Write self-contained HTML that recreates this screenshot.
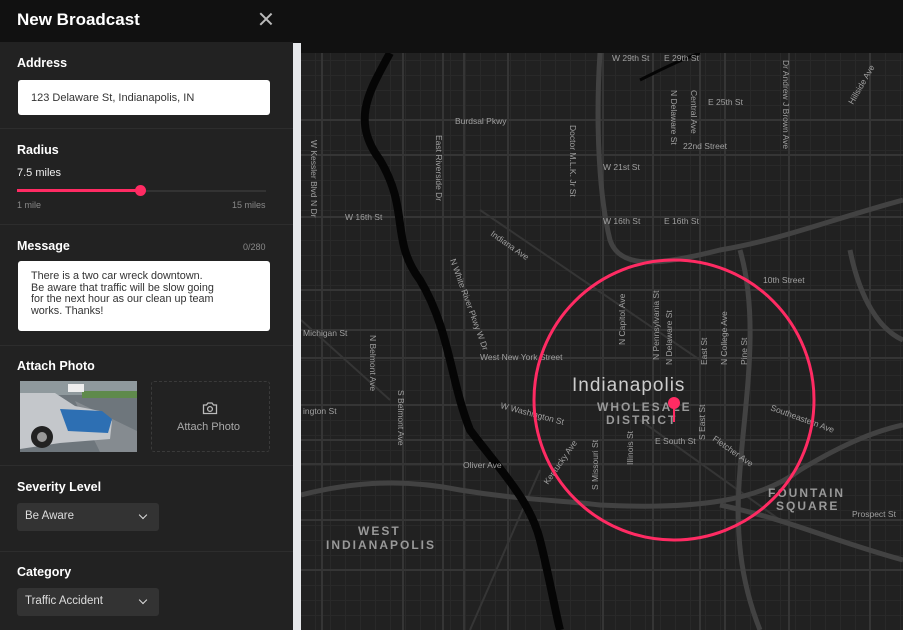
<!DOCTYPE html>
<html><head><meta charset="utf-8"><style>
*{margin:0;padding:0;box-sizing:border-box}
body{width:903px;height:630px;overflow:hidden;background:#222;font-family:"Liberation Sans",sans-serif;position:relative}
.hdr{position:absolute;left:0;top:0;width:903px;height:53px;background:#111}
.panel{position:absolute;left:0;top:0;width:293px;height:630px;background:#222}
.ph{position:absolute;left:0;top:0;width:293px;height:42px;background:#111}
.ph h1{position:absolute;left:17px;top:10px;color:#fff;font-size:17px;font-weight:bold}
.x{position:absolute;left:259px;top:12px;width:14px;height:14px}
.x:before,.x:after{content:"";position:absolute;left:6px;top:-1px;width:1.5px;height:16px;background:#bbb;transform:rotate(45deg)}
.x:after{transform:rotate(-45deg)}
.lbl{position:absolute;left:17px;color:#fff;font-size:12.5px;font-weight:bold}
.div{position:absolute;left:0;width:293px;height:1px;background:#2d2d2d}
.inp{position:absolute;left:18px;width:252px;background:#fff;border-radius:3px;color:#333;font-size:11px}
.sm{position:absolute;font-size:9px;color:#888}
.dd{position:absolute;left:17px;width:142px;height:28px;background:#333;border-radius:3px;color:#ddd;font-size:11.5px;padding:7px 0 0 8px}
.dd:after{content:"";position:absolute;right:13px;top:9px;width:5px;height:5px;border-right:1.5px solid #ddd;border-bottom:1.5px solid #ddd;transform:rotate(45deg)}
.sb{position:absolute;left:293px;top:43px;width:8px;height:587px;background:#e6e8eb}
</style></head><body>
<div class="hdr"></div>
<svg style="position:absolute;left:301px;top:53px" width="602" height="577" viewBox="301 53 602 577">
<defs><pattern id="g" width="15" height="15" patternUnits="userSpaceOnUse"><path d="M0 .5H15M.5 0V15" stroke="#292929" stroke-width="1"/></pattern></defs>
<rect x="301" y="53" width="602" height="577" fill="#212121"/>
<rect x="301" y="53" width="602" height="577" fill="url(#g)"/>
<g stroke="#353535" stroke-width="2" fill="none">
<path d="M301 120H903M301 155H903M301 217H903M301 290H903M301 330H903M301 358H903M301 405H903M301 440H903M301 464H903M301 520H903M301 570H903"/>
<path d="M322 53V630M403 53V630M443 53V630M464 53V630M508 53V630M603 53V630M653 53V630M700 53V630M725 53V630M789 53V630M870 53V630"/>
<path d="M301 320L390 400M480 210L700 360M640 420L780 520M540 470L470 630"/>
</g>
<g stroke="#424242" stroke-width="5" fill="none">
<path d="M301 495C360 480 410 480 460 490C520 500 560 500 600 505C700 510 760 500 800 470C850 440 880 430 903 425"/>
<path d="M600 53C595 130 600 200 610 240C620 270 660 265 720 250C780 240 830 220 903 200"/>
<path d="M740 250C760 320 745 400 740 470C735 530 740 580 760 630"/>
<path d="M720 505C790 520 830 540 903 560"/>
<path d="M850 250C860 300 880 330 903 340"/>
</g>
<path d="M390 53C370 90 350 120 380 160C410 210 390 240 420 280C450 330 450 380 470 430C500 470 530 500 540 540C550 580 555 610 560 630" stroke="#050505" stroke-width="8" fill="none"/>
<path d="M640 80C660 70 680 60 700 53" stroke="#050505" stroke-width="3" fill="none"/>
<g fill="#a0a0a0" font-size="8.5" font-family="Liberation Sans,sans-serif">
<text x="455" y="124">Burdsal Pkwy</text>
<text x="612" y="61">W 29th St</text><text x="664" y="61">E 29th St</text>
<text x="708" y="105">E 25th St</text><text x="683" y="149">22nd Street</text>
<text x="603" y="170">W 21st St</text><text x="603" y="224">W 16th St</text><text x="664" y="224">E 16th St</text>
<text x="345" y="220">W 16th St</text><text x="303" y="336">Michigan St</text>
<text x="480" y="360">West New York Street</text><text x="303" y="414">ington St</text>
<text x="463" y="468">Oliver Ave</text><text x="763" y="283">10th Street</text>
<text x="852" y="517">Prospect St</text><text x="655" y="444">E South St</text>
<text x="490" y="235" transform="rotate(35 490 235)">Indiana Ave</text>
<text x="500" y="408" transform="rotate(15 500 408)">W Washington St</text>
<text x="770" y="410" transform="rotate(20 770 410)">Southeastern Ave</text>
<text x="712" y="440" transform="rotate(35 712 440)">Fletcher Ave</text>
<text x="548" y="485" transform="rotate(-55 548 485)">Kentucky Ave</text>
<text x="311" y="140" transform="rotate(90 311 140)">W Kessler Blvd N Dr</text>
<text x="436" y="135" transform="rotate(90 436 135)">East Riverside Dr</text>
<text x="570" y="125" transform="rotate(90 570 125)">Doctor M.L.K. Jr St</text>
<text x="671" y="90" transform="rotate(90 671 90)">N Delaware St</text>
<text x="691" y="90" transform="rotate(90 691 90)">Central Ave</text>
<text x="783" y="60" transform="rotate(90 783 60)">Dr Andrew J Brown Ave</text>
<text x="370" y="335" transform="rotate(90 370 335)">N Belmont Ave</text>
<text x="398" y="390" transform="rotate(90 398 390)">S Belmont Ave</text>
<text x="450" y="260" transform="rotate(70 450 260)">N White River Pkwy W Dr</text>
<text x="625" y="345" transform="rotate(-90 625 345)">N Capitol Ave</text>
<text x="659" y="360" transform="rotate(-90 659 360)">N Pennsylvania St</text>
<text x="672" y="365" transform="rotate(-90 672 365)">N Delaware St</text>
<text x="707" y="365" transform="rotate(-90 707 365)">East St</text>
<text x="727" y="365" transform="rotate(-90 727 365)">N College Ave</text>
<text x="747" y="365" transform="rotate(-90 747 365)">Pine St</text>
<text x="633" y="465" transform="rotate(-90 633 465)">Illinois St</text>
<text x="598" y="490" transform="rotate(-90 598 490)">S Missouri St</text>
<text x="705" y="440" transform="rotate(-90 705 440)">S East St</text>
<text x="853" y="105" transform="rotate(-60 853 105)">Hillside Ave</text>
</g>
<text x="572" y="391" fill="#ccc" font-size="19" letter-spacing="1">Indianapolis</text>
<g fill="#999" font-size="12" font-weight="bold" letter-spacing="2">
<text x="597" y="411">WHOLESALE</text><text x="606" y="424">DISTRICT</text>
<text x="768" y="497">FOUNTAIN</text><text x="776" y="510">SQUARE</text>
<text x="358" y="535">WEST</text><text x="326" y="549">INDIANAPOLIS</text>
</g>
<circle cx="674" cy="400" r="140" fill="none" stroke="#ff2b63" stroke-width="3"/>
<line x1="674" y1="404" x2="674" y2="422" stroke="#ff2b63" stroke-width="2"/>
<circle cx="674" cy="403" r="6" fill="#ff2b63"/>
</svg>
<div class="panel">
<div class="ph"><h1>New Broadcast</h1><div class="x"></div></div>
<div class="lbl" style="top:56px">Address</div>
<div class="inp" style="top:80px;height:35px;padding:12px 0 0 13px">123 Delaware St, Indianapolis, IN</div>
<div class="div" style="top:128px"></div>
<div class="lbl" style="top:143px">Radius</div>
<div style="position:absolute;left:17px;top:167px;color:#eee;font-size:11px">7.5 miles</div>
<div style="position:absolute;left:17px;top:190px;width:249px;height:2px;background:#333"></div>
<div style="position:absolute;left:17px;top:189px;width:123px;height:3px;background:#ff2b63"></div>
<div style="position:absolute;left:135px;top:185px;width:11px;height:11px;border-radius:50%;background:#ff2b63"></div>
<div class="sm" style="left:17px;top:200px">1 mile</div>
<div class="sm" style="left:232px;top:200px">15 miles</div>
<div class="div" style="top:224px"></div>
<div class="lbl" style="top:239px">Message</div>
<div class="sm" style="left:243px;top:242px">0/280</div>
<div class="inp" style="top:261px;height:70px;padding:10px 0 0 13px;line-height:11.5px;font-size:10.8px">There is a two car wreck downtown.<br>Be aware that traffic will be slow going<br>for the next hour as our clean up team<br>works. Thanks!</div>
<div class="div" style="top:345px"></div>
<div class="lbl" style="top:359px">Attach Photo</div>
<svg style="position:absolute;left:20px;top:381px" width="117" height="71">
<rect width="117" height="71" fill="#6e767c"/>
<rect width="117" height="14" fill="#8f999d"/><rect x="62" y="10" width="55" height="7" fill="#5f8a4c"/>
<path d="M55 20L117 50V71H80Z" fill="#858b90"/>
<path d="M0 12H35L55 25L80 30L92 40L90 58L40 62L0 68Z" fill="#c4c7cb"/>
<path d="M40 28L82 30L92 38L88 52L48 50Z" fill="#2d6fb3"/>
<circle cx="22" cy="56" r="11" fill="#222"/><circle cx="22" cy="56" r="5" fill="#999"/>
<rect x="48" y="3" width="16" height="8" fill="#eee"/>
</svg>
<div style="position:absolute;left:151px;top:381px;width:119px;height:71px;border:1px dashed #3a3a3a;border-radius:3px"></div>
<svg style="position:absolute;left:202px;top:401px" width="16" height="14"><path d="M1.5 4h3l1.5-2h4l1.5 2h3v8.5h-13z" fill="none" stroke="#bbb" stroke-width="1.3"/><circle cx="8" cy="8" r="2.4" fill="none" stroke="#bbb" stroke-width="1.3"/></svg>
<div style="position:absolute;left:177px;top:421px;color:#aaa;font-size:11px">Attach Photo</div>
<div class="div" style="top:465px"></div>
<div class="lbl" style="top:480px">Severity Level</div>
<div class="dd" style="top:503px">Be Aware</div>
<div class="div" style="top:551px"></div>
<div class="lbl" style="top:565px">Category</div>
<div class="dd" style="top:588px">Traffic Accident</div>
</div>
<div class="sb"></div>
</body></html>
